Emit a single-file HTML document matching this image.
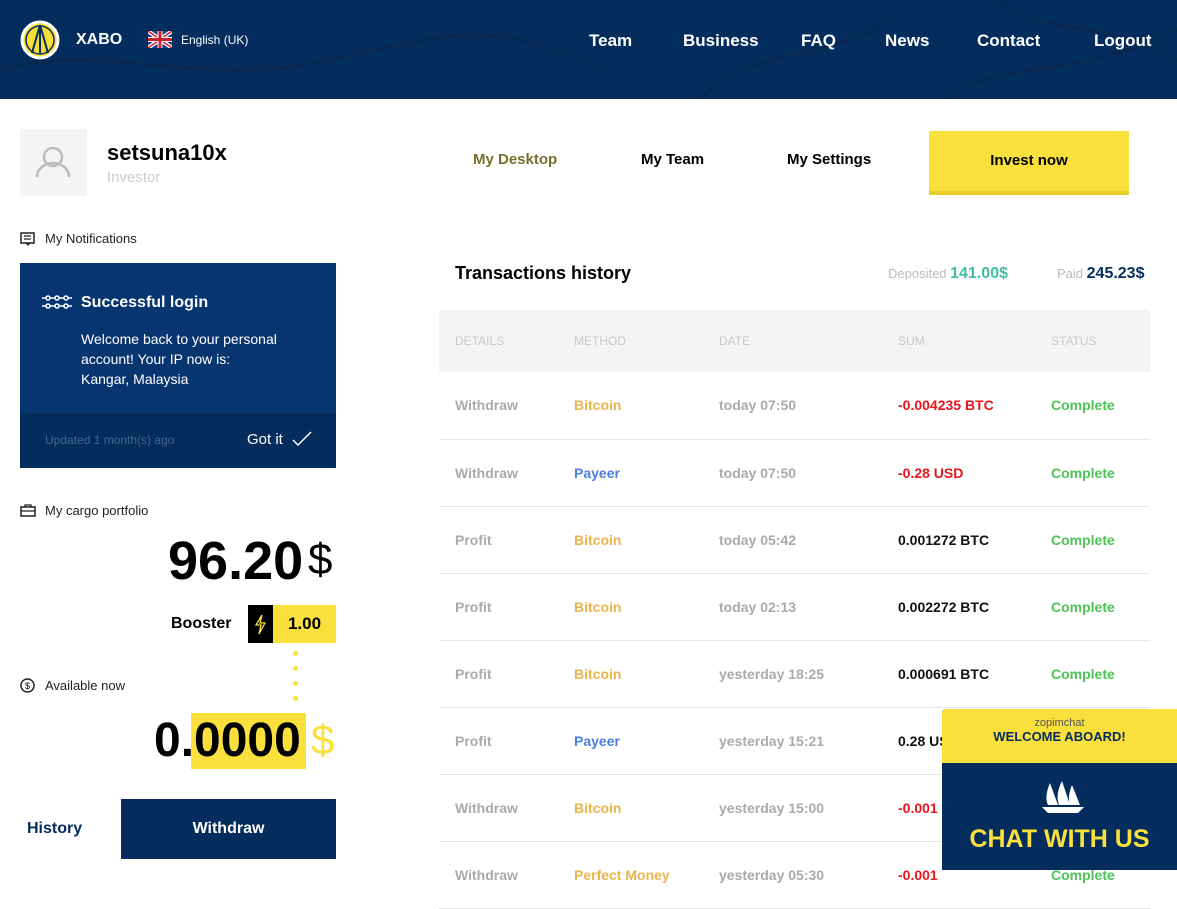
<!DOCTYPE html>
<html><head><meta charset="utf-8"><style>
*{margin:0;padding:0;box-sizing:border-box}
body{width:1177px;height:870px;overflow:hidden;background:#fff;font-family:"Liberation Sans",sans-serif;position:relative;color:#000}
.hdr{position:absolute;left:0;top:0;width:1177px;height:99px;background:#042c5c}
.nav{position:absolute;top:31px;color:#fff;font-size:17px;font-weight:bold}
.abs{position:absolute}
.tab{position:absolute;top:151px;font-size:15px;font-weight:bold}
table{position:absolute;left:439px;top:310px;width:711px;border-collapse:collapse;font-size:14px;font-weight:bold}
th{height:62px;background:#f4f4f4;color:#c8c8c8;font-size:12px;font-weight:normal;text-align:left;padding-left:16px}
td{height:67px;border-bottom:1px solid #e6e6e6;padding-left:16px;color:#aaa}
tr{height:67px}
.bt{color:#e9b44c}.py{color:#4a7fe0}.neg{color:#e8141a}.ok{color:#4cc458}.k{color:#111}
</style></head><body>
<div class="hdr">
<svg class="abs" style="left:0;top:0" width="1177" height="99"><g fill="none" stroke="#0d2547" stroke-width="1.5"><path d="M0 70 C100 40 200 90 330 60 S500 20 600 70"/><path d="M700 99 C760 40 860 60 900 10"/><path d="M950 99 C990 60 1080 80 1177 30"/><path d="M1000 0 C1050 40 1120 20 1177 60"/></g></svg>
<svg class="abs" style="left:20px;top:20px" width="40" height="40"><circle cx="20" cy="20" r="18" fill="#f5dd3a" stroke="#fff" stroke-width="3"/><circle cx="20" cy="20" r="14" fill="none" stroke="#042c5c" stroke-width="1.5"/><path d="M20 5 L12 33 M20 5 L28 33 M20 5 L20 33" stroke="#042c5c" stroke-width="2"/></svg>
<div class="abs" style="left:76px;top:31px;color:#fff;font-weight:bold;font-size:16px">XABO</div>
<svg class="abs" style="left:148px;top:31px" width="24" height="17"><rect width="24" height="17" fill="#1f3c8c"/><path d="M0 0L24 17M24 0L0 17" stroke="#fff" stroke-width="4"/><path d="M0 0L24 17M24 0L0 17" stroke="#d0202a" stroke-width="1.5"/><path d="M12 0V17M0 8.5H24" stroke="#fff" stroke-width="5"/><path d="M12 0V17M0 8.5H24" stroke="#d0202a" stroke-width="3"/></svg>
<div class="abs" style="left:181px;top:33px;color:#fff;font-size:12px">English (UK)</div>
<div class="nav" style="left:589px">Team</div><div class="nav" style="left:683px">Business</div><div class="nav" style="left:801px">FAQ</div><div class="nav" style="left:885px">News</div><div class="nav" style="left:977px">Contact</div><div class="nav" style="left:1094px">Logout</div>
</div>
<div class="abs" style="left:20px;top:129px;width:67px;height:67px;background:#f4f4f4"><svg width="67" height="67"><circle cx="33" cy="28" r="9" fill="none" stroke="#bbb" stroke-width="2.5"/><path d="M17 48 a16 14 0 0 1 32 0" fill="none" stroke="#bbb" stroke-width="2.5"/></svg></div>
<div class="abs" style="left:107px;top:140px;font-size:22px;font-weight:bold">setsuna10x</div>
<div class="abs" style="left:107px;top:169px;font-size:15px;color:#ccc">Investor</div>
<div class="tab" style="left:473px;color:#7b6d2a">My Desktop</div><div class="tab" style="left:641px">My Team</div><div class="tab" style="left:787px">My Settings</div>
<div class="abs" style="left:929px;top:131px;width:200px;height:64px;background:#fae03c;border-bottom:4px solid #e8cd2a;text-align:center;line-height:60px;font-weight:bold;font-size:15px">Invest now</div>
<svg class="abs" style="left:20px;top:232px" width="15" height="14"><rect x="1" y="1" width="13" height="10" fill="none" stroke="#222" stroke-width="1.5"/><path d="M4 4h7M4 7h7M6 11l2 2 2-2" stroke="#222" stroke-width="1.2" fill="none"/></svg>
<div class="abs" style="left:45px;top:231px;font-size:13px;color:#222">My Notifications</div>
<div class="abs" style="left:20px;top:263px;width:316px;height:205px;background:#073570">
<svg class="abs" style="left:22px;top:32px" width="30" height="14"><g stroke="#fff" stroke-width="1.5" fill="none"><path d="M0 3h30M0 11h30"/><circle cx="6" cy="3" r="2" fill="#073570"/><circle cx="15" cy="3" r="2" fill="#073570"/><circle cx="24" cy="3" r="2" fill="#073570"/><circle cx="6" cy="11" r="2" fill="#073570"/><circle cx="15" cy="11" r="2" fill="#073570"/><circle cx="24" cy="11" r="2" fill="#073570"/></g></svg>
<div class="abs" style="left:61px;top:31px;color:#fff;font-weight:bold;font-size:16px">Successful login</div>
<div class="abs" style="left:61px;top:66px;color:#fff;font-size:14px;line-height:20px;width:210px">Welcome back to your personal account! Your IP now is:<br>Kangar, Malaysia</div>
<div class="abs" style="left:0;top:150px;width:316px;height:55px;background:#042c5c"></div>
<div class="abs" style="left:25px;top:170px;color:#4a6590;font-size:12px">Updated 1 month(s) ago</div>
<div class="abs" style="left:227px;top:168px;color:#fff;font-size:15px">Got it</div>
<svg class="abs" style="left:272px;top:168px" width="20" height="16"><path d="M1 9l5 5L19 1" stroke="#fff" stroke-width="1.5" fill="none"/></svg>
</div>
<svg class="abs" style="left:20px;top:504px" width="16" height="13"><rect x="1" y="3" width="14" height="9" fill="none" stroke="#222" stroke-width="1.5"/><path d="M5 3V1h6v2M1 7h14" stroke="#222" stroke-width="1.3" fill="none"/></svg>
<div class="abs" style="left:45px;top:503px;font-size:13px;color:#222">My cargo portfolio</div>
<div class="abs" style="left:168px;top:530px;font-size:54px;font-weight:bold;line-height:62px">96.20</div>
<div class="abs" style="left:308px;top:535px;font-size:44px;font-weight:300">$</div>
<div class="abs" style="left:171px;top:615px;font-size:16px;font-weight:bold">Booster</div>
<div class="abs" style="left:248px;top:605px;width:25px;height:38px;background:#000"><svg width="25" height="38"><path d="M14 10l-6 10h5l-2 9 6-11h-5z" fill="none" stroke="#fae03c" stroke-width="1.3"/></svg></div>
<div class="abs" style="left:273px;top:605px;width:63px;height:38px;background:#fae03c;text-align:center;line-height:38px;font-weight:bold;font-size:17px">1.00</div>
<div class="abs" style="left:293px;top:651px;width:5px;line-height:0"><div style="width:5px;height:5px;border-radius:50%;background:#fae03c;margin-bottom:10px"></div><div style="width:5px;height:5px;border-radius:50%;background:#fae03c;margin-bottom:10px"></div><div style="width:5px;height:5px;border-radius:50%;background:#fae03c;margin-bottom:10px"></div><div style="width:5px;height:5px;border-radius:50%;background:#fae03c"></div></div>
<svg class="abs" style="left:20px;top:678px" width="15" height="15"><circle cx="7.5" cy="7.5" r="6.5" fill="none" stroke="#222" stroke-width="1.5"/><text x="7.5" y="11" font-size="9" text-anchor="middle" font-family="Liberation Sans">$</text></svg>
<div class="abs" style="left:45px;top:678px;font-size:13px;color:#222">Available now</div>
<div class="abs" style="left:191px;top:713px;width:115px;height:56px;background:#fae03c"></div>
<div class="abs" style="left:154px;top:713px;font-size:48px;font-weight:bold;line-height:56px">0.0000</div>
<div class="abs" style="left:311px;top:716px;font-size:42px;color:#fae03c;font-weight:300">$</div>
<div class="abs" style="left:27px;top:820px;font-size:16px;font-weight:bold;color:#042c5c">History</div>
<div class="abs" style="left:121px;top:799px;width:215px;height:60px;background:#042c5c;color:#fff;text-align:center;line-height:60px;font-weight:bold;font-size:16px">Withdraw</div>
<div class="abs" style="left:455px;top:263px;font-size:18px;font-weight:bold">Transactions history</div>
<div class="abs" style="left:888px;top:265px;font-size:13px;color:#bbb">Deposited <span style="color:#3fc0a0;font-size:16px;font-weight:bold">141.00$</span></div>
<div class="abs" style="left:1057px;top:265px;font-size:13px;color:#bbb">Paid <span style="color:#042c5c;font-size:16px;font-weight:bold">245.23$</span></div>
<table>
<tr style="height:62px"><th style="width:119px">DETAILS</th><th style="width:145px">METHOD</th><th style="width:179px">DATE</th><th style="width:153px">SUM</th><th>STATUS</th></tr>
<tr><td>Withdraw</td><td class="bt">Bitcoin</td><td>today 07:50</td><td class="neg">-0.004235 BTC</td><td class="ok">Complete</td></tr>
<tr><td>Withdraw</td><td class="py">Payeer</td><td>today 07:50</td><td class="neg">-0.28 USD</td><td class="ok">Complete</td></tr>
<tr><td>Profit</td><td class="bt">Bitcoin</td><td>today 05:42</td><td class="k">0.001272 BTC</td><td class="ok">Complete</td></tr>
<tr><td>Profit</td><td class="bt">Bitcoin</td><td>today 02:13</td><td class="k">0.002272 BTC</td><td class="ok">Complete</td></tr>
<tr><td>Profit</td><td class="bt">Bitcoin</td><td>yesterday 18:25</td><td class="k">0.000691 BTC</td><td class="ok">Complete</td></tr>
<tr><td>Profit</td><td class="py">Payeer</td><td>yesterday 15:21</td><td class="k">0.28 USD</td><td class="ok">Complete</td></tr>
<tr><td>Withdraw</td><td class="bt">Bitcoin</td><td>yesterday 15:00</td><td class="neg">-0.001 BTC</td><td class="ok">Complete</td></tr>
<tr><td>Withdraw</td><td class="bt">Perfect Money</td><td>yesterday 05:30</td><td class="neg">-0.001</td><td class="ok">Complete</td></tr>
</table>
<div class="abs" style="left:942px;top:709px;width:235px;height:161px;background:#042c5c;border-radius:4px 0 0 0;overflow:hidden">
<div style="height:54px;background:#fae03c;text-align:center;padding-top:8px"><div style="font-size:11px;color:#555;line-height:12px">zopimchat</div><div style="font-size:13px;font-weight:bold;color:#042c5c">WELCOME ABOARD!</div></div>
<svg class="abs" style="left:98px;top:70px" width="46" height="36"><path d="M10 4 Q4 18 8 26 H18Z M22 2 Q15 16 19 26 H30Z M32 6 Q27 18 30 26 H40Z" fill="#fff"/><path d="M2 28 H44 L38 34 H8Z" fill="#fff"/></svg>
<div class="abs" style="left:0;top:116px;width:235px;text-align:center;font-size:25px;font-weight:bold;color:#fae03c">CHAT WITH US</div>
</div>
</body></html>
